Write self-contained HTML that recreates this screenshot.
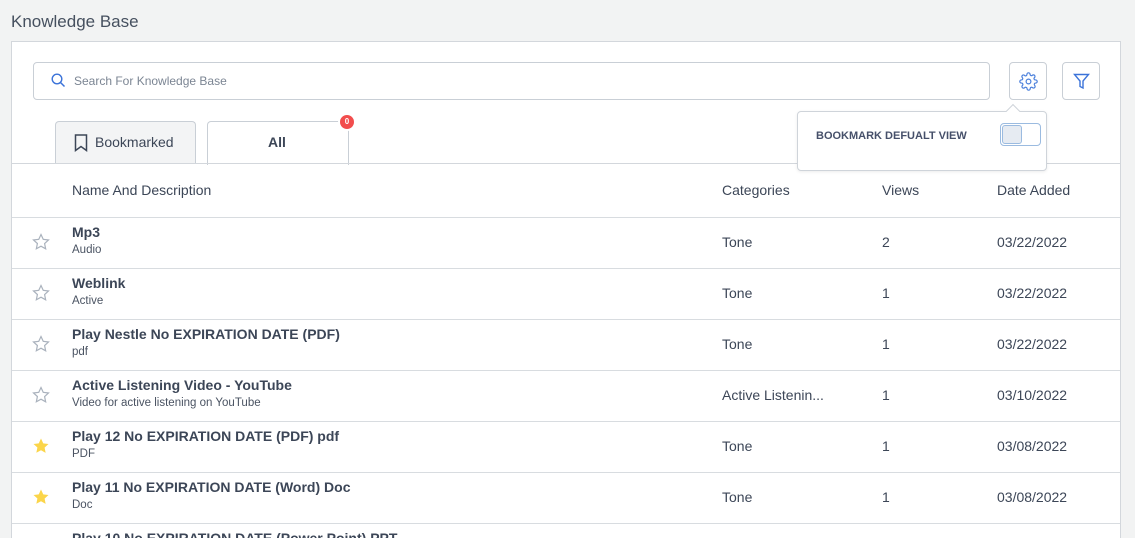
<!DOCTYPE html><html><head><style>
*{box-sizing:border-box;margin:0;padding:0}
html,body{width:1135px;height:538px;overflow:hidden}
body{background:#f2f3f3;font-family:"Liberation Sans",sans-serif;color:#3c4657;position:relative}
.abs{position:absolute}
h1{position:absolute;left:11px;top:12px;font-size:17px;font-weight:normal;color:#46505f}
.card{position:absolute;left:11px;top:41px;width:1110px;height:510px;background:#fff;border:1px solid #d3d7dc}
.search{left:21px;top:20px;width:957px;height:38px;border:1px solid #c9cfd6;border-radius:4px}
.search span{position:absolute;left:40px;top:11px;font-size:12px;color:#7b8593}
.btn{width:38px;height:38px;top:20px;border:1px solid #c9cfd6;border-radius:4px}
.tab{top:79px;height:43px;border:1px solid #c9cfd6;border-bottom:none;border-radius:4px 4px 0 0}
.row{position:absolute;left:0;width:1108px;height:51px;border-top:1px solid #d8dce0}
.t{position:absolute;left:60px;top:6px;font-size:14px;font-weight:bold;color:#3c4657}
.s{position:absolute;left:60px;top:26px;font-size:11.5px;color:#4a5362}
.c{position:absolute;top:16px;font-size:14px;color:#3c4657}
.star{position:absolute;left:20px;top:15px}
</style></head><body>
<h1>Knowledge Base</h1>
<div class="card">
<div class="abs search"><svg class="abs" style="left:17px;top:10px" width="15" height="15" viewBox="0 0 15 15"><circle cx="6" cy="6" r="4.8" fill="none" stroke="#3b73d9" stroke-width="1.4"/><path d="M9.5 9.5L13.5 13.5" stroke="#3b73d9" stroke-width="1.5"/></svg><span>Search For Knowledge Base</span></div>
<div class="abs btn" style="left:997px"><svg class="abs" style="left:9px;top:9px" width="19" height="19" viewBox="0 0 24 24" fill="none" stroke="#4a7fdb" stroke-width="1.5"><circle cx="12" cy="12" r="3"/><path d="M19.4 15a1.65 1.65 0 0 0 .33 1.82l.06.06a2 2 0 1 1-2.830 2.83l-.06-.06a1.65 1.65 0 0 0-2.73 1.170V21a2 2 0 1 1-4 0v-.09A1.65 1.65 0 0 0 9 19.4a1.65 1.65 0 0 0-1.82.33l-.06.06a2 2 0 1 1-2.83-2.83l.06-.06A1.65 1.65 0 0 0 3.17 14H3a2 2 0 1 1 0-4h.09A1.65 1.65 0 0 0 4.6 9a1.65 1.65 0 0 0-.33-1.82l-.06-.06a2 2 0 1 1 2.83-2.83l.06.06A1.65 1.65 0 0 0 10 3.17V3a2 2 0 1 1 4 0v.09a1.65 1.65 0 0 0 2.73 1.17l.06-.06a2 2 0 1 1 2.83 2.83l-.06.06A1.65 1.65 0 0 0 20.83 10H21a2 2 0 1 1 0 4h-.09a1.650 1.65 0 0 0-1.51 1z"/></svg></div>
<div class="abs btn" style="left:1050px"><svg class="abs" style="left:10px;top:10px" width="17" height="17" viewBox="0 0 17 17" fill="none" stroke="#3b73d9" stroke-width="1.4"><path d="M1.5 1.5h14l-5.5 6.5v7l-3-1.5v-5.5z"/></svg></div>
<div class="abs tab" style="left:43px;width:141px;background:#f3f4f5"><svg class="abs" style="left:18px;top:12px" width="14" height="18" viewBox="0 0 14 18" fill="none" stroke="#3c4657" stroke-width="1.5"><path d="M1.5 1h11v15.5l-5.5-4-5.5 4z"/></svg><span class="abs" style="left:39px;top:12px;font-size:14px">Bookmarked</span></div>
<div class="abs tab" style="left:195px;width:142px;height:44px;background:#fff"><span class="abs" style="left:60px;top:12px;font-size:14px;font-weight:bold">All</span></div>
<div class="abs" style="left:326px;top:71px;width:18px;height:18px;border-radius:50%;background:#f24d4d;border:2px solid #fff;color:#fff;font-size:8px;font-weight:bold;text-align:center;line-height:14px">0</div>
<div class="abs" style="left:0;top:121px;width:1108px;border-top:1px solid #d3d7dc"></div>
<span class="c" style="left:60px;top:140px">Name And Description</span>
<span class="c" style="left:710px;top:140px">Categories</span>
<span class="c" style="left:870px;top:140px">Views</span>
<span class="c" style="left:985px;top:140px">Date Added</span>
<div class="abs" style="left:785px;top:69px;width:250px;height:60px;background:#fff;border:1px solid #cfd4da;border-radius:4px;box-shadow:0 1px 3px rgba(0,0,0,.08)">
<div class="abs" style="left:210px;top:-6px;width:10px;height:10px;background:#fff;border-left:1px solid #cfd4da;border-top:1px solid #cfd4da;transform:rotate(45deg)"></div>
<span class="abs" style="left:18px;top:18px;font-size:11px;font-weight:bold;color:#46506a">BOOKMARK DEFUALT VIEW</span>
<div class="abs" style="left:202px;top:11px;width:41px;height:23px;border:1px solid #9bbbe0;border-radius:4px"><div class="abs" style="left:1px;top:1px;width:20px;height:19px;background:#e6ebf2;border:1px solid #9bbbe0;border-radius:3px"></div></div>
</div>
<div class="row" style="top:175px"><svg class="star" width="18" height="18" viewBox="0 0 24 24" fill="none" stroke="#aab2bd" stroke-width="1.6"><path d="M12 2l3 6.5 7 .8-5.2 4.8 1.4 7L12 17.6 5.8 21l1.4-7L2 9.3l7-.8z"/></svg><span class="t">Mp3</span><span class="s">Audio</span><span class="c" style="left:710px">Tone</span><span class="c" style="left:870px">2</span><span class="c" style="left:985px">03/22/2022</span></div>
<div class="row" style="top:226px"><svg class="star" width="18" height="18" viewBox="0 0 24 24" fill="none" stroke="#aab2bd" stroke-width="1.6"><path d="M12 2l3 6.5 7 .8-5.2 4.8 1.4 7L12 17.6 5.8 21l1.4-7L2 9.3l7-.8z"/></svg><span class="t">Weblink</span><span class="s">Active</span><span class="c" style="left:710px">Tone</span><span class="c" style="left:870px">1</span><span class="c" style="left:985px">03/22/2022</span></div>
<div class="row" style="top:277px"><svg class="star" width="18" height="18" viewBox="0 0 24 24" fill="none" stroke="#aab2bd" stroke-width="1.6"><path d="M12 2l3 6.5 7 .8-5.2 4.8 1.4 7L12 17.6 5.8 21l1.4-7L2 9.3l7-.8z"/></svg><span class="t">Play Nestle No EXPIRATION DATE (PDF)</span><span class="s">pdf</span><span class="c" style="left:710px">Tone</span><span class="c" style="left:870px">1</span><span class="c" style="left:985px">03/22/2022</span></div>
<div class="row" style="top:328px"><svg class="star" width="18" height="18" viewBox="0 0 24 24" fill="none" stroke="#aab2bd" stroke-width="1.6"><path d="M12 2l3 6.5 7 .8-5.2 4.8 1.4 7L12 17.6 5.8 21l1.4-7L2 9.3l7-.8z"/></svg><span class="t">Active Listening Video - YouTube</span><span class="s">Video for active listening on YouTube</span><span class="c" style="left:710px">Active Listenin...</span><span class="c" style="left:870px">1</span><span class="c" style="left:985px">03/10/2022</span></div>
<div class="row" style="top:379px"><svg class="star" width="18" height="18" viewBox="0 0 24 24" fill="#fbd54a"><path d="M12 2l3 6.5 7 .8-5.2 4.8 1.4 7L12 17.6 5.8 21l1.4-7L2 9.3l7-.8z"/></svg><span class="t">Play 12 No EXPIRATION DATE (PDF) pdf</span><span class="s">PDF</span><span class="c" style="left:710px">Tone</span><span class="c" style="left:870px">1</span><span class="c" style="left:985px">03/08/2022</span></div>
<div class="row" style="top:430px"><svg class="star" width="18" height="18" viewBox="0 0 24 24" fill="#fbd54a"><path d="M12 2l3 6.5 7 .8-5.2 4.8 1.4 7L12 17.6 5.8 21l1.4-7L2 9.3l7-.8z"/></svg><span class="t">Play 11 No EXPIRATION DATE (Word) Doc</span><span class="s">Doc</span><span class="c" style="left:710px">Tone</span><span class="c" style="left:870px">1</span><span class="c" style="left:985px">03/08/2022</span></div>
<div class="row" style="top:481px"><span class="t">Play 10 No EXPIRATION DATE (Power Point) PPT</span></div>
</div>
</body></html>
